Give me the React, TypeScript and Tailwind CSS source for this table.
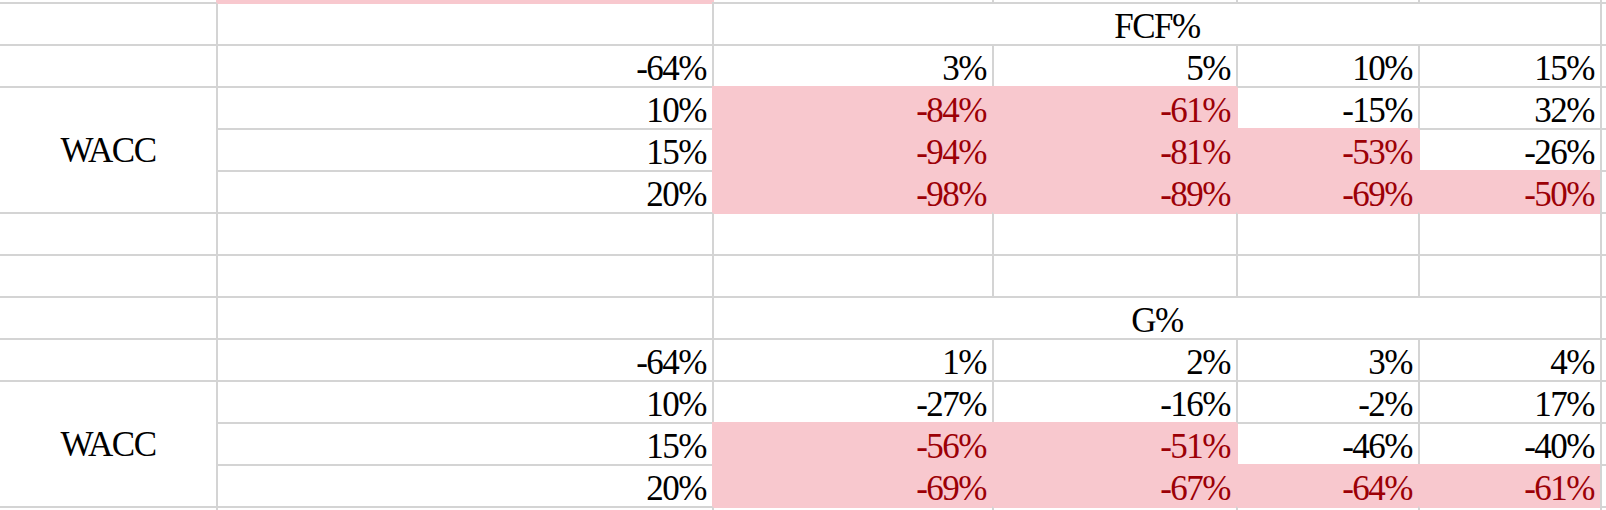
const PINK_CELLS = new Set([
  "0-1",
  "3-2", "3-3",
  "4-2", "4-3", "4-4",
  "5-2", "5-3", "5-4", "5-5",
  "11-2", "11-3",
  "12-2", "12-3", "12-4", "12-5",
]);

const TEXT: Record<string, string> = {
  "1-2": "FCF%",
  "2-1": "-64%", "2-2": "3%", "2-3": "5%", "2-4": "10%", "2-5": "15%",
  "3-0": "WACC", "3-1": "10%", "3-2": "-84%", "3-3": "-61%", "3-4": "-15%", "3-5": "32%",
  "4-1": "15%", "4-2": "-94%", "4-3": "-81%", "4-4": "-53%", "4-5": "-26%",
  "5-1": "20%", "5-2": "-98%", "5-3": "-89%", "5-4": "-69%", "5-5": "-50%",
  "8-2": "G%",
  "9-1": "-64%", "9-2": "1%", "9-3": "2%", "9-4": "3%", "9-5": "4%",
  "10-0": "WACC", "10-1": "10%", "10-2": "-27%", "10-3": "-16%", "10-4": "-2%", "10-5": "17%",
  "11-1": "15%", "11-2": "-56%", "11-3": "-51%", "11-4": "-46%", "11-5": "-40%",
  "12-1": "20%", "12-2": "-69%", "12-3": "-67%", "12-4": "-64%", "12-5": "-61%",
};

const ROWS = 14;
const COLS = 7;

const isPink = (r: number, c: number) => PINK_CELLS.has(`${r}-${c}`);

// cells hidden under a merge
const covered = (r: number, c: number) => {
  if (c === 0 && (r === 4 || r === 5 || r === 11 || r === 12)) return true;
  if ((r === 1 || r === 8) && c >= 3 && c <= 5) return true;
  return false;
};

function SheetCell({ r, c }: { r: number; c: number }) {
  const pink = isPink(r, c);
  const text = TEXT[`${r}-${c}`];
  const isWacc = c === 0 && (r === 3 || r === 10);
  const isHeader = c === 2 && (r === 1 || r === 8);

  const top =
    r === 0
      ? ""
      : pink || isPink(r - 1, c)
        ? "border-t-2 border-t-[#f8c8ce]"
        : "border-t-2 border-t-[#d4d4d4]";
  const left =
    c === 0
      ? ""
      : c < 6 && (pink || isPink(r, c - 1))
        ? "border-l-2 border-l-[#f8c8ce]"
        : "border-l-2 border-l-[#d4d4d4]";

  return (
    <div
      className={[
        "flex",
        top,
        left,
        pink ? "bg-[#f8c8ce] text-[#9c0006]" : "bg-white text-black",
        isWacc ? "row-span-3 items-center justify-center" : "",
        isHeader ? "col-span-4 items-end justify-center" : "",
        !isWacc && !isHeader ? "items-end justify-end pr-[6px]" : "",
      ].join(" ")}
    >
      {text && <span className="whitespace-nowrap">{text}</span>}
    </div>
  );
}

export default function App() {
  const cells = [];
  for (let r = 0; r < ROWS; r++) {
    for (let c = 0; c < COLS; c++) {
      if (covered(r, c)) continue;
      cells.push(<SheetCell key={`${r}-${c}`} r={r} c={c} />);
    }
  }

  return (
    <div className="h-[510px] w-[1606px] overflow-hidden bg-white font-['Liberation_Serif',serif] text-[35px] leading-none tracking-[-1.5px]">
      <div className="grid grid-cols-[216px_496px_280px_244px_182px_182px_1fr] grid-rows-[2px_repeat(12,42px)_4px]">
        {cells}
      </div>
    </div>
  );
}
